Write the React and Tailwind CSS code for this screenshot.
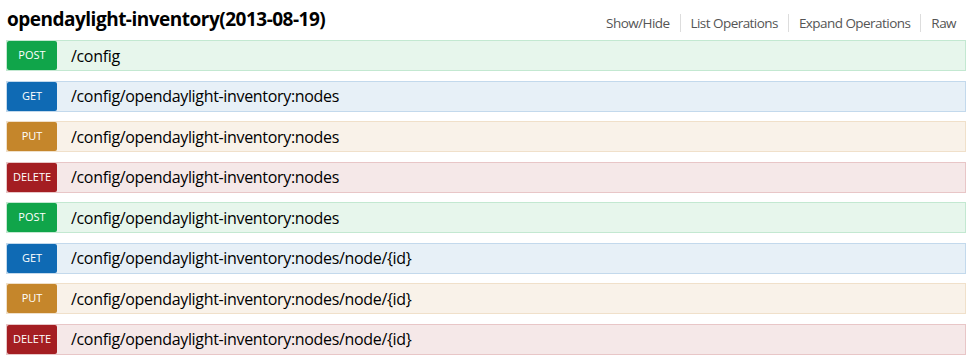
import React from "react";

const styles = {
  post: { badge: "bg-[#10a54a]", row: "bg-[#e7f6ec] border-[#c3e8d1]" },
  get: { badge: "bg-[#0f6ab4]", row: "bg-[#e7f0f7] border-[#c3d9ec]" },
  put: { badge: "bg-[#c5862b]", row: "bg-[#f9f2e9] border-[#f0e0ca]" },
  delete: { badge: "bg-[#a41e22]", row: "bg-[#f5e8e8] border-[#e8c6c7]" },
};

const operations = [
  { method: "post", path: "/config" },
  { method: "get", path: "/config/opendaylight-inventory:nodes" },
  { method: "put", path: "/config/opendaylight-inventory:nodes" },
  { method: "delete", path: "/config/opendaylight-inventory:nodes" },
  { method: "post", path: "/config/opendaylight-inventory:nodes" },
  { method: "get", path: "/config/opendaylight-inventory:nodes/node/{id}" },
  { method: "put", path: "/config/opendaylight-inventory:nodes/node/{id}" },
  { method: "delete", path: "/config/opendaylight-inventory:nodes/node/{id}" },
];

const links = ["Show/Hide", "List Operations", "Expand Operations", "Raw"];

function Operation({ method, path }) {
  const s = styles[method];
  return (
    <li className={`flex items-center h-[31px] mb-[9.5px] border ${s.row}`}>
      <span
        className={`flex items-center justify-center w-[50px] h-[29px] rounded-[2px] text-[11px] uppercase text-white ${s.badge}`}
      >
        {method}
      </span>
      <span className="ml-[14px] text-[16px] text-black leading-none tracking-[-0.33px]">
        {path}
      </span>
    </li>
  );
}

export default function App() {
  return (
    <div
      className="w-[974px] bg-white pl-[6px] pr-[8px]"
      style={{ fontFamily: '"Open Sans", "DejaVu Sans", sans-serif' }}
    >
      <div className="flex items-center justify-between h-[40px]">
        <h2 className="pl-[1px] pb-[1px] text-[19px] font-bold text-black tracking-[-0.5px]">
          opendaylight-inventory(2013-08-19)
        </h2>
        <ul className="flex items-center pt-[6px]">
          {links.map((l, i) => (
            <li
              key={l}
              className={`px-[10px] text-[13.5px] text-[#555] leading-[18px] tracking-[-0.55px] ${
                i < links.length - 1 ? "border-r border-[#ddd]" : ""
              }`}
            >
              {l}
            </li>
          ))}
        </ul>
      </div>
      <ul>
        {operations.map((op, i) => (
          <Operation key={i} {...op} />
        ))}
      </ul>
    </div>
  );
}
